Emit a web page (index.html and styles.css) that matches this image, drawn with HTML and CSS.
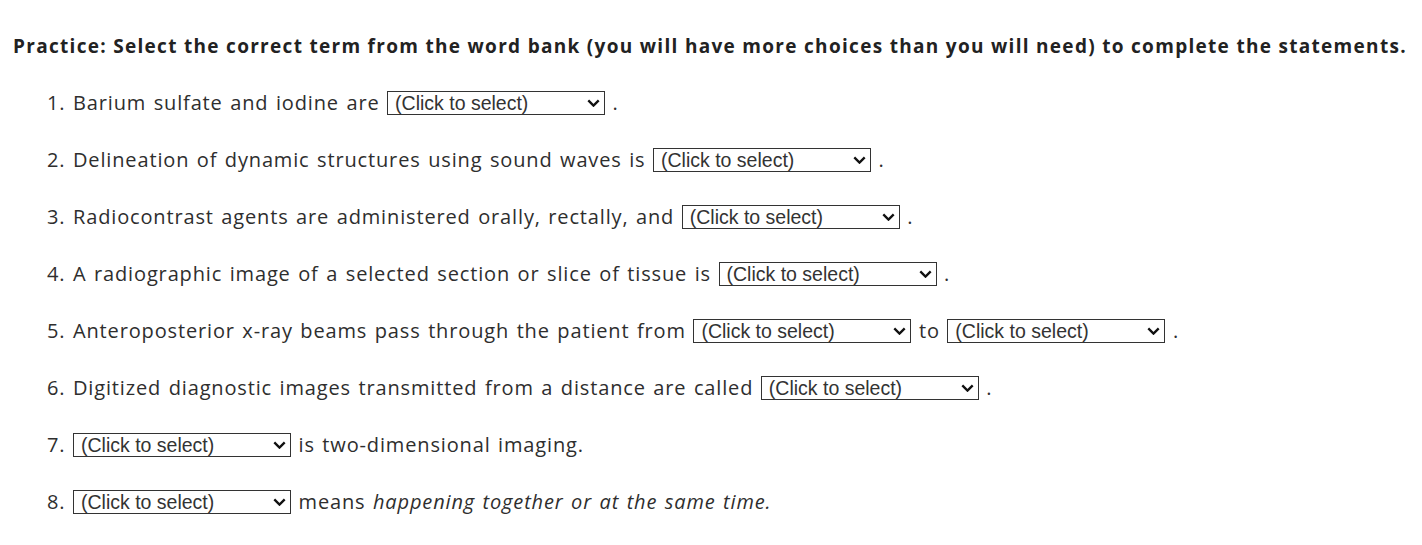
FILE: index.html
```html
<!DOCTYPE html>
<html>
	<head>
		<meta charset="UTF-8">
		<title>Practice</title>
		<link rel="stylesheet" href="styles.css">
	</head>
	<body>
		<p class="consigne">Practice: Select the correct term from the word bank (you will have more choices than you will need) to complete the statements.</p>
		<ol class="questions">
			<li>Barium sulfate and iodine are <span class="select_box"><select><option>(Click to select)</option></select><svg class="chevron" viewBox="0 0 10 6"><path d="M1 1l4 4 4-4"/></svg></span> .</li>
			<li>Delineation of dynamic structures using sound waves is <span class="select_box"><select><option>(Click to select)</option></select><svg class="chevron" viewBox="0 0 10 6"><path d="M1 1l4 4 4-4"/></svg></span> .</li>
			<li>Radiocontrast agents are administered orally, rectally, and <span class="select_box"><select><option>(Click to select)</option></select><svg class="chevron" viewBox="0 0 10 6"><path d="M1 1l4 4 4-4"/></svg></span> .</li>
			<li>A radiographic image of a selected section or slice of tissue is <span class="select_box"><select><option>(Click to select)</option></select><svg class="chevron" viewBox="0 0 10 6"><path d="M1 1l4 4 4-4"/></svg></span> .</li>
			<li>Anteroposterior x-ray beams pass through the patient from <span class="select_box"><select><option>(Click to select)</option></select><svg class="chevron" viewBox="0 0 10 6"><path d="M1 1l4 4 4-4"/></svg></span> to <span class="select_box"><select><option>(Click to select)</option></select><svg class="chevron" viewBox="0 0 10 6"><path d="M1 1l4 4 4-4"/></svg></span> .</li>
			<li>Digitized diagnostic images transmitted from a distance are called <span class="select_box"><select><option>(Click to select)</option></select><svg class="chevron" viewBox="0 0 10 6"><path d="M1 1l4 4 4-4"/></svg></span> .</li>
			<li><span class="select_box"><select><option>(Click to select)</option></select><svg class="chevron" viewBox="0 0 10 6"><path d="M1 1l4 4 4-4"/></svg></span> is two-dimensional imaging.</li>
			<li><span class="select_box"><select><option>(Click to select)</option></select><svg class="chevron" viewBox="0 0 10 6"><path d="M1 1l4 4 4-4"/></svg></span> means <em>happening together or at the same time.</em></li>
		</ol>
	</body>
</html>
```

FILE: styles.css
```css
body {
	margin: 0;
	padding: 0 13px;
	font-family: "Open Sans", sans-serif;
	color: #2e2e2e;
}

.consigne {
	margin: 34px 0 0;
	font-size: 19px;
	font-weight: bold;
	line-height: 24px;
	letter-spacing: 1.3px;
	color: #222;
	white-space: nowrap;
}

.questions {
	margin: 33px 0 0;
	padding-left: 60px;
	font-size: 20px;
	line-height: 24px;
	letter-spacing: 0.85px;
	word-spacing: 1.5px;
}

.questions li {
	margin-bottom: 33px;
}

.select_box {
	position: relative;
	display: inline-block;
	vertical-align: middle;
	margin: -4px 0;
	top: -2px;
	letter-spacing: 0;
	word-spacing: 0;
}

.select_box select {
	display: block;
	appearance: none;
	width: 218px;
	height: 24px;
	margin: 0;
	padding: 0 0 0 7px;
	border: 1px solid #333;
	border-radius: 0;
	background: #fff;
	font-family: "Liberation Sans", Arial, sans-serif;
	font-size: 19.5px;
	color: #333;
	outline: none;
}

.chevron {
	position: absolute;
	right: 5px;
	top: 8px;
	width: 13px;
	height: 8px;
	fill: none;
	stroke: #111;
	stroke-width: 1.8;
}
```
